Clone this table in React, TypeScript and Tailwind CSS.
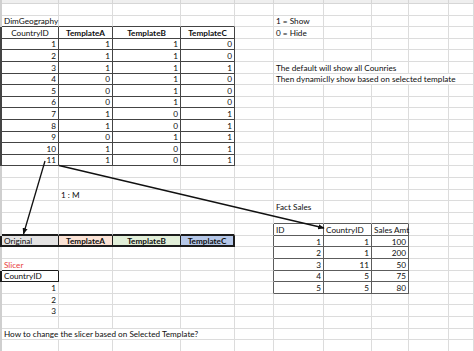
import React from "react"

type Cell = {
  t?: string
  a?: "l" | "r" | "c"
  b?: boolean
  bg?: string
  color?: string
  span?: number
}

type Tbl = "dim" | "fact" | "tpl" | "slicer" | null

const NROWS = 30
const NCOLS = 11 // col 0 is the sheet edge, 1..10 = A..J

const cells: Record<string, Cell> = {}
const put = (r: number, c: number, cell: Cell) => {
  cells[`${r},${c}`] = cell
}

// DimGeography
const tA = [1, 1, 1, 0, 0, 0, 1, 1, 0, 1, 1]
const tB = [1, 1, 1, 1, 1, 1, 0, 0, 1, 0, 0]
const tC = [0, 0, 1, 0, 0, 0, 1, 1, 1, 1, 1]

put(1, 1, { t: "DimGeography" })
put(2, 1, { t: "CountryID", a: "c" })
put(2, 2, { t: "TemplateA", a: "c", b: true })
put(2, 3, { t: "TemplateB", a: "c", b: true })
put(2, 4, { t: "TemplateC", a: "c", b: true })
for (let i = 0; i < 11; i++) {
  put(3 + i, 1, { t: String(i + 1), a: "r" })
  put(3 + i, 2, { t: String(tA[i]), a: "r" })
  put(3 + i, 3, { t: String(tB[i]), a: "r" })
  put(3 + i, 4, { t: String(tC[i]), a: "r" })
}

// notes
put(1, 6, { t: "1 = Show" })
put(2, 6, { t: "0 = Hide" })
put(5, 6, { t: "The default will show all Counries", span: 3 })
put(6, 6, { t: "Then dynamiclly show based on selected template", span: 5 })
put(16, 2, { t: "1 : M" })

// Fact Sales
put(17, 6, { t: "Fact Sales" })
put(19, 6, { t: "ID" })
put(19, 7, { t: "CountryID" })
put(19, 8, { t: "Sales Amt" })
const fc = [1, 1, 11, 5, 5]
const fa = [100, 200, 50, 75, 80]
for (let i = 0; i < 5; i++) {
  put(20 + i, 6, { t: String(i + 1), a: "r" })
  put(20 + i, 7, { t: String(fc[i]), a: "r" })
  put(20 + i, 8, { t: String(fa[i]), a: "r" })
}

// templates row
put(20, 1, { t: "Original", bg: "bg-[#e4e3e3]" })
put(20, 2, { t: "TemplateA", a: "c", b: true, bg: "bg-[#fbe3d6]" })
put(20, 3, { t: "TemplateB", a: "c", b: true, bg: "bg-[#e2efd9]" })
put(20, 4, { t: "TemplateC", a: "c", b: true, bg: "bg-[#b5c7e8]" })

// slicer
put(22, 1, { t: "Slicer", color: "text-[#e8413c]" })
put(23, 1, { t: "CountryID" })
put(24, 1, { t: "1", a: "r" })
put(25, 1, { t: "2", a: "r" })
put(26, 1, { t: "3", a: "r" })

put(28, 1, { t: "How to change the slicer based on Selected Template?", span: 4 })

const tableAt = (r: number, c: number): Tbl => {
  if (r === 20 && c >= 1 && c <= 4) return "tpl"
  if (r >= 2 && r <= 13 && c >= 1 && c <= 4) return "dim"
  if (r >= 19 && r <= 24 && c >= 6 && c <= 8) return "fact"
  if (r === 23 && c === 1) return "slicer"
  return null
}

const RIGHT: Record<string, string> = {
  dim: "border-r-[#444444]",
  fact: "border-r-[#5c5c5c]",
  tpl: "border-r-[#1c1c1c]",
  slicer: "border-r-[#1c1c1c]",
  none: "border-r-[#dcdcdc]",
}
const BOTTOM: Record<string, string> = {
  dim: "border-b-[#444444]",
  fact: "border-b-[#5c5c5c]",
  tpl: "border-b-[#1c1c1c]",
  slicer: "border-b-[#1c1c1c]",
  none: "border-b-[#dcdcdc]",
}
const EDGE: Record<string, string> = {
  dim: "bg-[#444444]",
  fact: "bg-[#5c5c5c]",
  tpl: "bg-[#1c1c1c]",
  slicer: "bg-[#1c1c1c]",
  none: "bg-[#cfcfcf]",
}
const SPAN: Record<number, string> = {
  1: "",
  2: "col-span-2",
  3: "col-span-3",
  4: "col-span-4",
  5: "col-span-5",
}
const ALIGN = { l: "justify-start", r: "justify-end", c: "justify-center" }

function Sheet() {
  const out: React.ReactNode[] = []

  // top strip (bottom of the column header area)
  for (let c = 0; c < NCOLS; c++) {
    out.push(
      <div
        key={`top-${c}`}
        className={c === 0 ? "bg-[#cfcfcf]" : "bg-[#efefef] border-r border-b border-[#d6d6d6]"}
      />
    )
  }

  for (let r = 0; r < NROWS; r++) {
    let skip = 0
    for (let c = 0; c < NCOLS; c++) {
      if (skip > 0) {
        skip--
        continue
      }
      if (c === 0) {
        out.push(<div key={`${r},0`} className={EDGE[tableAt(r, 1) ?? "none"]} />)
        continue
      }
      const cell = cells[`${r},${c}`] ?? {}
      const span = cell.span ?? 1
      skip = span - 1
      const last = c + span - 1
      const rk = tableAt(r, last) ?? tableAt(r, last + 1) ?? "none"
      const bk = tableAt(r, c) ?? tableAt(r + 1, c) ?? "none"
      const thickB = (r === 20 || r === 19) && c >= 1 && c <= 4
      const thickR = r === 20 && last === 4
      out.push(
        <div
          key={`${r},${c}`}
          className={[
            "flex items-center min-w-0 px-[2px] border-r border-b whitespace-nowrap",
            thickB ? "border-b-2" : "",
            thickR ? "border-r-2" : "",
            RIGHT[rk],
            BOTTOM[bk],
            SPAN[span],
            ALIGN[cell.a ?? "l"],
            cell.bg ?? "",
            cell.b ? "font-bold" : "",
            cell.color ?? "text-[#0e0e0e]",
          ].join(" ")}
        >
          {cell.t ? <span className="leading-none pt-[1px]">{cell.t}</span> : null}
        </div>
      )
    }
  }
  return (
    <div className="grid grid-cols-[2px_57px_54px_68px_54px_39px_50px_48px_37px_40px_1fr] grid-rows-[4px_repeat(30,11.6px)] w-[474px] h-[351px] overflow-hidden">
      {out}
    </div>
  )
}

export default function App() {
  return (
    <div className="relative w-[474px] h-[351px] overflow-hidden bg-white font-['Lato',sans-serif] text-[8.2px]">
      <Sheet />
      {/* relationship arrows drawn over the sheet */}
      <svg
        className="absolute inset-0 pointer-events-none"
        width="474"
        height="351"
        viewBox="0 0 474 351"
      >
        <defs>
          <marker id="head" viewBox="0 0 10 10" refX="9" refY="5" markerWidth="5" markerHeight="5" orient="auto">
            <path d="M0 1 L10 5 L0 9 z" fill="#111" />
          </marker>
        </defs>
        <line x1="45" y1="161" x2="23.5" y2="234" stroke="#111" strokeWidth="1.3" markerEnd="url(#head)" />
        <line x1="59" y1="165.5" x2="324" y2="228" stroke="#111" strokeWidth="1.3" markerEnd="url(#head)" />
      </svg>
    </div>
  )
}
